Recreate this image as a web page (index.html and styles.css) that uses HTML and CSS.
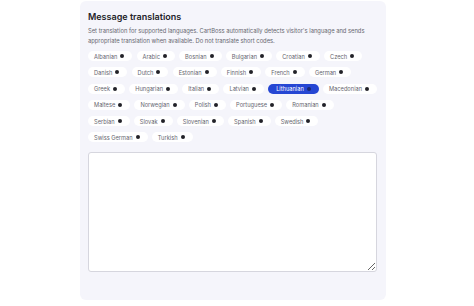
FILE: index.html
```html
<!DOCTYPE html>
<html lang="en">
<head>
    <meta charset="UTF-8">
    <meta name="viewport" content="width=device-width, initial-scale=1.0">
    <title>Message translations</title>
    <link rel="stylesheet" href="styles.css">
</head>
<body>
    <div class="card">
        <h2>Message translations</h2>
        <p class="desc">Set translation for supported languages. CartBoss automatically detects visitor's language and sends appropriate translation when available. Do not translate short codes.</p>

        <div class="langs">
            <div class="lang-row">
                <span class="lang">Albanian <i class="dot"></i></span>
                <span class="lang">Arabic <i class="dot"></i></span>
                <span class="lang">Bosnian <i class="dot"></i></span>
                <span class="lang">Bulgarian <i class="dot"></i></span>
                <span class="lang">Croatian <i class="dot"></i></span>
                <span class="lang">Czech <i class="dot"></i></span>
            </div>
            <div class="lang-row">
                <span class="lang">Danish <i class="dot"></i></span>
                <span class="lang">Dutch <i class="dot"></i></span>
                <span class="lang">Estonian <i class="dot"></i></span>
                <span class="lang">Finnish <i class="dot"></i></span>
                <span class="lang">French <i class="dot"></i></span>
                <span class="lang">German <i class="dot"></i></span>
            </div>
            <div class="lang-row">
                <span class="lang">Greek <i class="dot"></i></span>
                <span class="lang">Hungarian <i class="dot"></i></span>
                <span class="lang">Italian <i class="dot"></i></span>
                <span class="lang">Latvian <i class="dot"></i></span>
                <span class="lang active">Lithuanian <i class="dot"></i></span>
                <span class="lang">Macedonian <i class="dot"></i></span>
            </div>
            <div class="lang-row">
                <span class="lang">Maltese <i class="dot"></i></span>
                <span class="lang">Norwegian <i class="dot"></i></span>
                <span class="lang">Polish <i class="dot"></i></span>
                <span class="lang">Portuguese <i class="dot"></i></span>
                <span class="lang">Romanian <i class="dot"></i></span>
            </div>
            <div class="lang-row">
                <span class="lang">Serbian <i class="dot"></i></span>
                <span class="lang">Slovak <i class="dot"></i></span>
                <span class="lang">Slovenian <i class="dot"></i></span>
                <span class="lang">Spanish <i class="dot"></i></span>
                <span class="lang">Swedish <i class="dot"></i></span>
            </div>
            <div class="lang-row">
                <span class="lang">Swiss German <i class="dot"></i></span>
                <span class="lang">Turkish <i class="dot"></i></span>
            </div>
        </div>

        <textarea class="message"></textarea>
    </div>
</body>
</html>
```

FILE: styles.css
```css
:root {
    --card-bg: #f5f5fb;
    --text-color: #222228;
    --muted-color: #66666f;
    --active-color: #2546d3;
}

body {
    font-family: 'Inter', sans-serif;
    background-color: #ffffff;
    margin: 0;
    padding: 1px 0 0 80px;
}

.card {
    width: 306px;
    box-sizing: border-box;
    background: var(--card-bg);
    border-radius: 6px;
    padding: 10px 9px 28px 8px;
}

h2 {
    font-size: 9px;
    line-height: 12px;
    font-weight: 600;
    color: var(--text-color);
    margin: 0 0 3px 0;
}

.desc {
    font-size: 5.8px;
    line-height: 9.5px;
    color: var(--muted-color);
    margin: 0 0 6px 0;
}

.langs {
    display: flex;
    flex-direction: column;
    gap: 6.3px;
}

.lang-row {
    display: flex;
    gap: 4.2px;
}

.lang {
    display: inline-flex;
    align-items: center;
    gap: 3px;
    height: 10px;
    padding: 0 8px 0 6px;
    border-radius: 5px;
    background: #ffffff;
    font-size: 5.7px;
    color: var(--muted-color);
}

.lang .dot {
    width: 4px;
    height: 4px;
    border-radius: 50%;
    background: #222228;
}

.lang.active {
    background: var(--active-color);
    color: #ffffff;
    padding-left: 8px;
}

.lang.active .dot {
    background: #1b2a73;
}

.message {
    display: block;
    box-sizing: border-box;
    width: 100%;
    height: 120px;
    margin-top: 10px;
    border: 1px solid #d6d6de;
    border-radius: 3px;
    background: #ffffff;
}
```
